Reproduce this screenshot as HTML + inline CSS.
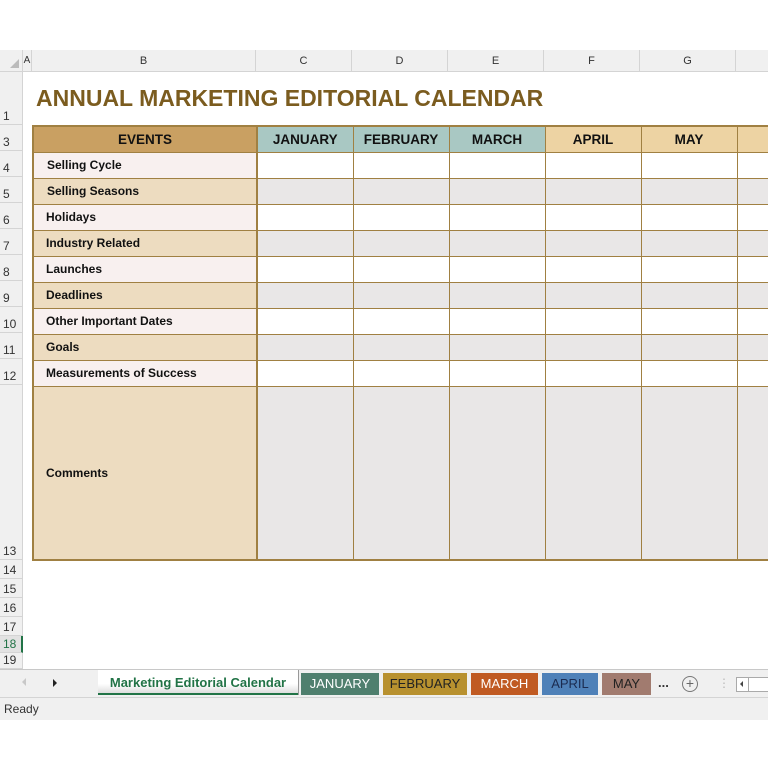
<!DOCTYPE html>
<html><head><meta charset="utf-8"><style>
*{margin:0;padding:0;box-sizing:border-box}
body{width:768px;height:768px;background:#fff;position:relative;overflow:hidden;font-family:"Liberation Sans",Arial,sans-serif}
.a{position:absolute}
.colhdr{top:50px;height:22px;background:#f0f0f0;border-bottom:1px solid #d4d4d4;width:768px;left:0}
.ch{position:absolute;top:0;height:22px;line-height:22px;text-align:center;font-size:11px;color:#333;border-right:1px solid #d4d4d4}
.rh{position:absolute;left:0;width:23px;background:#f0f0f0;border-bottom:1px solid #d4d4d4;border-right:1px solid #d4d4d4;font-size:12px;color:#333;padding-left:3px;display:flex;align-items:flex-end;padding-bottom:1px}
table{position:absolute;left:32px;top:125px;width:764px;border-collapse:collapse;table-layout:fixed}
td{border:2px solid #a08042;border-top:1px solid #a08042;border-bottom:1px solid #a08042;font-size:12px;font-weight:bold;color:#111;padding:0 0 0 12px;overflow:hidden;white-space:nowrap}
td.m{border-left:1px solid #a08042;border-right:1px solid #a08042}
tr.h td{text-align:center;padding:0;font-size:13.5px;height:26px}
tr.r td{height:26px}
.l1{background:#f8f0ef}.l2{background:#eddcc0}
.w{background:#fff}.g{background:#e9e7e7}
.tab{position:absolute;top:673px;height:22px;line-height:22px;font-size:13px;text-align:center}
</style></head><body>
<div class="a colhdr">
<div class="ch" style="left:0;width:23px"><span style="position:absolute;left:10px;top:9px;width:0;height:0;border-left:9px solid transparent;border-bottom:9px solid #bbb"></span></div>
<div class="ch" style="left:23px;width:9px;font-size:10px">A</div>
<div class="ch" style="left:32px;width:224px">B</div>
<div class="ch" style="left:256px;width:96px">C</div>
<div class="ch" style="left:352px;width:96px">D</div>
<div class="ch" style="left:448px;width:96px">E</div>
<div class="ch" style="left:544px;width:96px">F</div>
<div class="ch" style="left:640px;width:96px">G</div>
<div class="ch" style="left:736px;width:40px"></div>
</div>
<div class="rh" style="top:72px;height:53px">1</div>
<div class="rh" style="top:125px;height:26px">3</div>
<div class="rh" style="top:151px;height:26px">4</div>
<div class="rh" style="top:177px;height:26px">5</div>
<div class="rh" style="top:203px;height:26px">6</div>
<div class="rh" style="top:229px;height:26px">7</div>
<div class="rh" style="top:255px;height:26px">8</div>
<div class="rh" style="top:281px;height:26px">9</div>
<div class="rh" style="top:307px;height:26px">10</div>
<div class="rh" style="top:333px;height:26px">11</div>
<div class="rh" style="top:359px;height:26px">12</div>
<div class="rh" style="top:385px;height:175px">13</div>
<div class="rh" style="top:560px;height:19px">14</div>
<div class="rh" style="top:579px;height:19px">15</div>
<div class="rh" style="top:598px;height:19px">16</div>
<div class="rh" style="top:617px;height:19px">17</div>
<div class="rh" style="top:636px;height:17px;color:#217346;border-right:2px solid #217346;background:#e2e2e2">18</div>
<div class="rh" style="top:653px;height:16px">19</div>
<div class="a" style="left:36px;top:85px;font-size:23px;font-weight:bold;color:#7b5c1f;white-space:nowrap">ANNUAL MARKETING EDITORIAL CALENDAR</div>
<table>
<colgroup><col style="width:224px"><col style="width:96px"><col style="width:96px"><col style="width:96px"><col style="width:96px"><col style="width:96px"><col style="width:60px"></colgroup>
<tr class="h"><td style="background:#c9a062;border-top:2px solid #a08042">EVENTS</td><td class="m" style="background:#a9c8c3;border-top:2px solid #a08042">JANUARY</td><td class="m" style="background:#a9c8c3;border-top:2px solid #a08042">FEBRUARY</td><td class="m" style="background:#a9c8c3;border-top:2px solid #a08042">MARCH</td><td class="m" style="background:#edd3a3;border-top:2px solid #a08042">APRIL</td><td class="m" style="background:#edd3a3;border-top:2px solid #a08042">MAY</td><td class="m" style="background:#edd3a3;border-top:2px solid #a08042"></td></tr>
<tr class="r"><td class="l1" style="padding-left:13px">Selling Cycle</td><td class="m w"></td><td class="m w"></td><td class="m w"></td><td class="m w"></td><td class="m w"></td><td class="m w"></td></tr>
<tr class="r"><td class="l2" style="padding-left:13px">Selling Seasons</td><td class="m g"></td><td class="m g"></td><td class="m g"></td><td class="m g"></td><td class="m g"></td><td class="m g"></td></tr>
<tr class="r"><td class="l1">Holidays</td><td class="m w"></td><td class="m w"></td><td class="m w"></td><td class="m w"></td><td class="m w"></td><td class="m w"></td></tr>
<tr class="r"><td class="l2">Industry Related</td><td class="m g"></td><td class="m g"></td><td class="m g"></td><td class="m g"></td><td class="m g"></td><td class="m g"></td></tr>
<tr class="r"><td class="l1">Launches</td><td class="m w"></td><td class="m w"></td><td class="m w"></td><td class="m w"></td><td class="m w"></td><td class="m w"></td></tr>
<tr class="r"><td class="l2">Deadlines</td><td class="m g"></td><td class="m g"></td><td class="m g"></td><td class="m g"></td><td class="m g"></td><td class="m g"></td></tr>
<tr class="r"><td class="l1">Other Important Dates</td><td class="m w"></td><td class="m w"></td><td class="m w"></td><td class="m w"></td><td class="m w"></td><td class="m w"></td></tr>
<tr class="r"><td class="l2">Goals</td><td class="m g"></td><td class="m g"></td><td class="m g"></td><td class="m g"></td><td class="m g"></td><td class="m g"></td></tr>
<tr class="r"><td class="l1">Measurements of Success</td><td class="m w"></td><td class="m w"></td><td class="m w"></td><td class="m w"></td><td class="m w"></td><td class="m w"></td></tr>
<tr><td class="l2" style="height:174px;border-bottom:2px solid #a08042">Comments</td><td class="m g" style="border-bottom:2px solid #a08042"></td><td class="m g" style="border-bottom:2px solid #a08042"></td><td class="m g" style="border-bottom:2px solid #a08042"></td><td class="m g" style="border-bottom:2px solid #a08042"></td><td class="m g" style="border-bottom:2px solid #a08042"></td><td class="m g" style="border-bottom:2px solid #a08042"></td></tr>
</table>
<div class="a" style="left:0;top:669px;width:768px;height:29px;background:#f0f0f0;border-top:1px solid #c8c8c8;border-bottom:1px solid #d4d4d4"></div>
<div class="a" style="left:22px;top:678px;width:0;height:0;border-top:4px solid transparent;border-bottom:4px solid transparent;border-right:4px solid #c8c8c8"></div>
<div class="a" style="left:53px;top:679px;width:0;height:0;border-top:4px solid transparent;border-bottom:4px solid transparent;border-left:4px solid #222"></div>
<div class="tab" style="left:98px;top:670px;width:200px;height:25px;background:linear-gradient(#fff,#fff 60%,#ddd);border-bottom:2px solid #217346;color:#217346;font-weight:bold;font-size:13px;line-height:26px;box-shadow:1px 0 0 #999">Marketing Editorial Calendar</div>
<div class="tab" style="left:301px;width:78px;background:#4f7f6e;color:#fff">JANUARY</div>
<div class="tab" style="left:383px;width:84px;background:#b8912f;color:#222">FEBRUARY</div>
<div class="tab" style="left:471px;width:67px;background:#c05a22;color:#fff">MARCH</div>
<div class="tab" style="left:542px;width:56px;background:#4f81b8;color:#1b2b50">APRIL</div>
<div class="tab" style="left:602px;width:49px;background:#a17b6f;color:#222">MAY</div>
<div class="a" style="left:658px;top:675px;font-size:13px;color:#333;font-weight:bold">...</div>
<div class="a" style="left:682px;top:676px;width:16px;height:16px;border:1px solid #777;border-radius:50%;font-size:14px;line-height:13px;text-align:center;color:#666">+</div>
<div class="a" style="left:718px;top:676px;font-size:12px;color:#bbb">⋮</div>
<div class="a" style="left:736px;top:677px;width:40px;height:15px;border:1px solid #aaa;background:#fff"></div>
<div class="a" style="left:736px;top:677px;width:13px;height:15px;border-right:1px solid #aaa"></div>
<div class="a" style="left:740px;top:681px;width:0;height:0;border-top:3px solid transparent;border-bottom:3px solid transparent;border-right:3px solid #444"></div>
<div class="a" style="left:0;top:698px;width:768px;height:22px;background:#f0f0f0"></div>
<div class="a" style="left:4px;top:702px;font-size:12px;color:#333">Ready</div>
</body></html>
